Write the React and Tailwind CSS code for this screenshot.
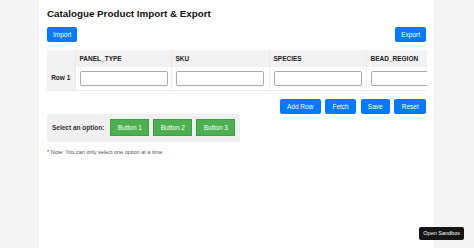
import React from 'react'

const columns = ['PANEL_TYPE', 'SKU', 'SPECIES', 'BEAD_REGION']

export default function App() {
  return (
    <div className="relative flex h-[248px] bg-[#f4f4f4] font-['Liberation_Sans',Arial,sans-serif] text-[#222]">
      <div className="w-[39px] shrink-0" />
      <main className="w-[395px] shrink-0 bg-white pl-[8px] pr-[7px] pt-[7px]">
        <h1 className="text-[9.8px] font-bold leading-[13px] text-[#111]">
          Catalogue Product Import &amp; Export
        </h1>

        <div className="mt-[7px] flex justify-between pr-[1px]">
          <button className="h-[15px] rounded-[2px] bg-[#007bff] px-[6px] text-[6.5px] leading-[15px] text-white">
            Import
          </button>
          <button className="h-[15px] rounded-[2px] bg-[#007bff] px-[6px] text-[6.5px] leading-[15px] text-white">
            Export
          </button>
        </div>

        <div className="mt-[8px] overflow-hidden">
          <table className="w-[416px] max-w-none table-fixed border-collapse">
            <colgroup>
              <col className="w-[28px]" />
              <col className="w-[96px]" />
              <col className="w-[98px]" />
              <col className="w-[97px]" />
              <col className="w-[97px]" />
            </colgroup>
            <thead>
              <tr className="h-[17px] bg-[#f2f2f2]">
                <th className="border-r border-[#e8e8e8]" />
                {columns.map((c) => (
                  <th
                    key={c}
                    className="border-r border-[#e8e8e8] px-[4px] text-left text-[6.5px] font-bold text-[#222]"
                  >
                    {c}
                  </th>
                ))}
              </tr>
            </thead>
            <tbody>
              <tr className="h-[23px] border-b border-[#ececec]">
                <td className="border-r border-[#e8e8e8] bg-[#f2f2f2] text-center text-[6.5px] font-bold">
                  Row 1
                </td>
                {columns.map((c) => (
                  <td key={c} className="border-r border-[#f0f0f0] px-[4px]">
                    <input
                      type="text"
                      className="block h-[15px] w-[88px] rounded-[2px] border border-[#aaa] bg-white"
                    />
                  </td>
                ))}
              </tr>
            </tbody>
          </table>
        </div>

        <div className="mt-[8px] flex justify-end gap-[4.5px] pr-[1px]">
          {['Add Row', 'Fetch', 'Save', 'Reset'].map((b) => (
            <button
              key={b}
              className="h-[15px] rounded-[2px] bg-[#007bff] px-[7.3px] text-[6.5px] leading-[15px] text-white"
            >
              {b}
            </button>
          ))}
        </div>

        <div className="flex h-[28px] w-[193px] items-center gap-[4px] rounded-[2px] bg-[#f0f0f0] px-[5px]">
          <span className="mr-[2px] whitespace-nowrap text-[6.5px] font-bold text-[#333]">Select an option:</span>
          {['Button 1', 'Button 2', 'Button 3'].map((b) => (
            <button
              key={b}
              className="h-[17px] w-[39px] shrink-0 border border-[#3f9e43] bg-[#4caf50] text-[6.5px] text-white"
            >
              {b}
            </button>
          ))}
        </div>

        <p className="mt-[6px] text-[5.5px] text-[#555]">* Note: You can only select one option at a time.</p>
      </main>

      <button className="absolute bottom-[8px] right-[10px] h-[13px] rounded-[2px] bg-[#151515] px-[4px] text-[5.5px] text-white">
        Open Sandbox
      </button>
    </div>
  )
}
